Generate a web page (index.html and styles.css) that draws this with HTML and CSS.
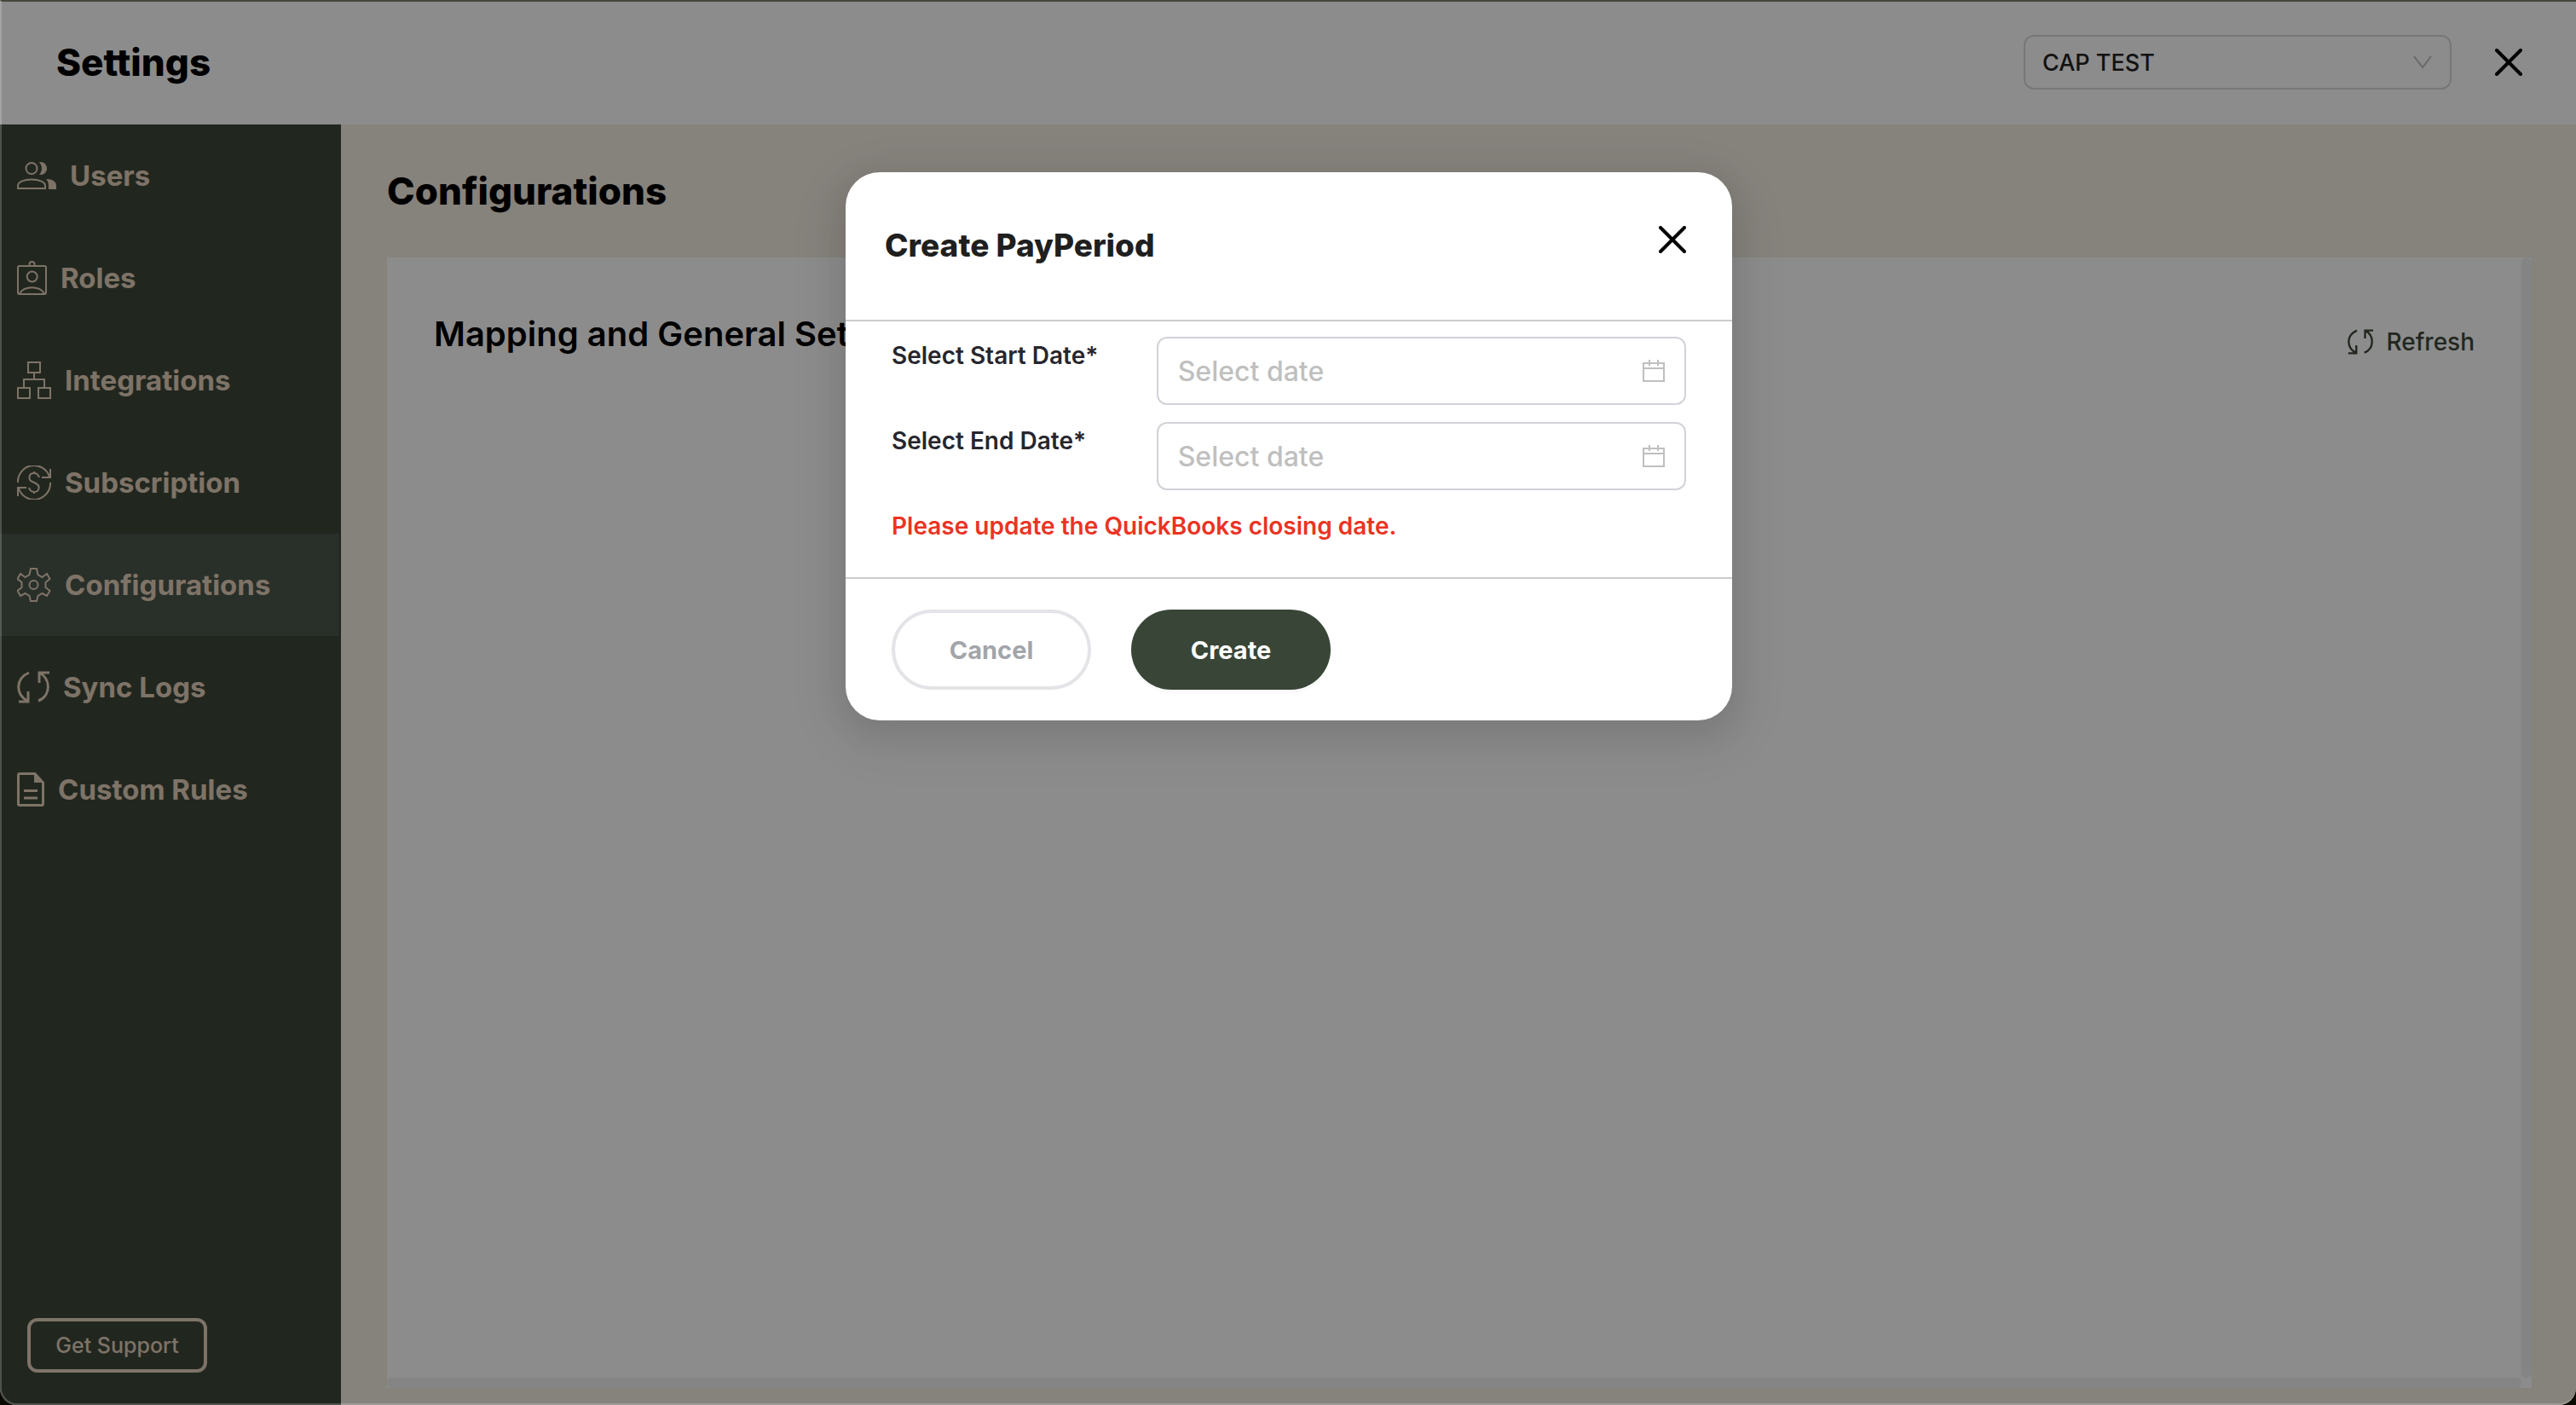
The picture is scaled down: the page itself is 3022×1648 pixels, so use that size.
FILE: index.html
```html
<!DOCTYPE html>
<html lang="en">
<head>
<title>Settings</title>
<meta charset="UTF-8">
<meta name="viewport" content="width=device-width, initial-scale=1.0">
<link rel="stylesheet" href="styles.css">
</head>
<body>
  <div class="app">
    <header class="topbar">
      <h1>Settings</h1>
      <div class="topbar-right">
        <div class="select-box">
          <select id="company" aria-label="Company">
            <option>CAP TEST</option>
          </select>
          <svg class="chevron" width="22" height="16" viewBox="0 0 22 16" fill="none" stroke="currentColor" stroke-width="2"><path d="M1 1l10 13L21 1"/></svg>
        </div>
        <button type="button" class="close-btn" aria-label="Close settings">
          <svg width="32" height="32" viewBox="0 0 32 32" fill="none" stroke="currentColor" stroke-width="4" stroke-linecap="round"><path d="M2 2l28 28M30 2L2 30"/></svg>
        </button>
      </div>
    </header>

    <div class="layout">
      <aside class="sidebar">
        <nav>
          <a href="#users">
            <svg width="46" height="32" viewBox="0 0 46 32" fill="none" stroke="currentColor" stroke-width="2"><circle cx="17" cy="7.5" r="6.5"/><path d="M1 31v-3c0-10 32-10 32 0v3z"/><path d="M26 0c12-1 12 16 0 15 4-5 4-10 0-15zM34 20c8 0 12 3 12 8v4h-9c0-6 0-9-3-12z" fill="currentColor" stroke="none"/></svg>
            <span>Users</span>
          </a>
          <a href="#roles">
            <svg width="35" height="40" viewBox="0 0 35 40" fill="none" stroke="currentColor" stroke-width="2"><rect x="1" y="6" width="33" height="33" rx="2"/><path d="M14.500 6V4a3 3 0 0 1 6 0v2"/><circle cx="17.700" cy="18.500" r="6"/><path d="M3 38c6-9 23-9 29 0"/></svg>
            <span>Roles</span>
          </a>
          <a href="#integrations">
            <svg width="40" height="44" viewBox="0 0 40 44" fill="none" stroke="currentColor" stroke-width="2"><rect x="13" y="1" width="14" height="12"/><rect x="1" y="31" width="14" height="12"/><rect x="25" y="31" width="14" height="12"/><path d="M20 13v8M8 31V21h24v10"/></svg>
            <span>Integrations</span>
          </a>
          <a href="#subscription">
            <svg width="40" height="40" viewBox="0 0 40 40" fill="none" stroke="currentColor" stroke-width="2"><path d="M1 20A19 19 0 0 1 38 13M39 4v10H29M39 20A19 19 0 0 1 2 27M1 36V26h10"/><path d="M26 14c-1-3-3-5-6-5-7 0-7 8-2 10l4 2c6 3 4 10-2 10-3 0-5-2-6-5M20 7v2M20 31v2"/></svg>
            <span>Subscription</span>
          </a>
          <a href="#configurations" class="active">
            <svg width="40" height="40" viewBox="0 0 40 40" fill="none" stroke="currentColor" stroke-width="2"><path d="M16 1h7l1.500 7 5 3 5.500-4 3.500 6-5 4v6l5 4-3.500 6-5.500-3-5 3-1.500 6h-7l-1.500-6-5-3-5.500 3-3.500-6 5-4v-6l-5-4 3.500-6 5.500 4 5-3z"/><circle cx="19.500" cy="20" r="5"/></svg>
            <span>Configurations</span>
          </a>
          <a href="#sync-logs">
            <svg width="38" height="38" viewBox="0 0 38 38" fill="none" stroke="currentColor" stroke-width="3"><path d="M14 2C-2 9-2 27 12 35M2 36h11V24M25 35c15-6 15-26 1-33M38 2H26v12"/></svg>
            <span>Sync Logs</span>
          </a>
          <a href="#custom-rules">
            <svg width="32" height="40" viewBox="0 0 32 40" fill="none" stroke="currentColor" stroke-width="3"><path d="M3 1.500h18L30.500 12v25q0 1.500-1.500 1.500H3q-1.500 0-1.500-1.500V3q0-1.500 1.500-1.500zM8 21.500h16M8 30h16"/><path d="M20 1v11h11z" fill="currentColor" stroke="none"/></svg>
            <span>Custom Rules</span>
          </a>
        </nav>
        <button type="button" class="support-btn">Get Support</button>
      </aside>

      <main class="content">
        <h2>Configurations</h2>
        <div class="panel">
          <div class="panel-head">
            <h3>Mapping and General Settings</h3>
            <button type="button" class="refresh-btn">
              <svg width="30" height="30" viewBox="0 0 38 38" fill="none" stroke="currentColor" stroke-width="3"><path d="M14 2C-2 9-2 27 12 35M1 36h12V24M25 35c15-6 15-26 1-33M38 2H26v12"/></svg>
              <span>Refresh</span>
            </button>
          </div>
          <div class="track"></div>
          <div class="track"></div>
        </div>
      </main>
    </div>

    <div class="mask">
      <form class="modal" role="dialog" aria-labelledby="modal-title">
        <div class="modal-header">
          <h2 id="modal-title">Create PayPeriod</h2>
          <button type="button" class="close-btn" aria-label="Close">
            <svg width="32" height="32" viewBox="0 0 32 32" fill="none" stroke="currentColor" stroke-width="4" stroke-linecap="round"><path d="M2 2l28 28M30 2L2 30"/></svg>
          </button>
        </div>
        <div class="modal-body">
          <div class="form-row">
            <label for="start_date">Select Start Date*</label>
            <div class="date-box">
              <input type="text" id="start_date" name="start_date" placeholder="Select date">
              <svg width="26" height="26" viewBox="0 0 26 26" fill="none" stroke="currentColor" stroke-width="2"><path d="M1 4h24v21H1zM1 10h24M8 0v7M18 0v7"/></svg>
            </div>
          </div>
          <div class="form-row">
            <label for="end_date">Select End Date*</label>
            <div class="date-box">
              <input type="text" id="end_date" name="end_date" placeholder="Select date">
              <svg width="26" height="26" viewBox="0 0 26 26" fill="none" stroke="currentColor" stroke-width="2"><path d="M1 4h24v21H1zM1 10h24M8 0v7M18 0v7"/></svg>
            </div>
          </div>
          <p class="error">Please update the QuickBooks closing date.</p>
        </div>
        <div class="modal-footer">
          <button type="button" class="btn cancel">Cancel</button>
          <button type="submit" class="btn create">Create</button>
        </div>
      </form>
    </div>
  </div>
</body>
</html>
```

FILE: styles.css
```css
* {
  box-sizing: border-box;
}

body {
  margin: 0;
  background-color: #0a0a02;
  font-family: Inter, sans-serif;
  color: #000;
}

h1, h2, h3, p {
  margin: 0;
}

button, input, select {
  font-family: inherit;
}

button {
  cursor: pointer;
}

svg {
  display: block;
  flex-shrink: 0;
}

.app {
  position: relative;
  min-height: 100vh;
  display: flex;
  flex-direction: column;
  background-color: #f4ede2;
  border-radius: 0 0 20px 20px;
  overflow: hidden;
}

/* window edge */
.app::after {
  content: "";
  position: absolute;
  inset: 0;
  border: 2px solid rgba(255, 255, 255, 0.2);
  border-top-color: #47463e;
  border-right: none;
  border-radius: 0 0 20px 20px;
  pointer-events: none;
}

.topbar {
  display: flex;
  justify-content: space-between;
  align-items: center;
  height: 146px;
  padding: 0 63px 0 66px;
  background-color: #fff;
}

.topbar h1,
.content h2 {
  font-size: 44px;
  line-height: 56px;
  font-weight: 800;
}

.topbar-right {
  display: flex;
  align-items: center;
  gap: 51px;
}

.select-box {
  position: relative;
  width: 502px;
}

.select-box select {
  appearance: none;
  display: block;
  width: 100%;
  height: 64px;
  padding: 0 20px;
  border: 2px solid #d9d9d9;
  border-radius: 12px;
  background-color: transparent;
  color: #222;
  font-size: 27px;
  font-weight: 500;
}

.chevron {
  position: absolute;
  right: 23px;
  top: 24px;
  color: #bfbfbf;
}

.close-btn {
  padding: 0;
  border: none;
  background: none;
  color: #000;
}

.layout {
  flex: 1;
  display: flex;
}

.sidebar {
  display: flex;
  flex-direction: column;
  justify-content: space-between;
  width: 400px;
  padding-bottom: 38px;
  background-color: #3c473a;
}

.sidebar a {
  display: flex;
  align-items: center;
  gap: 16px;
  height: 120px;
  padding-left: 20px;
  margin-right: 2px;
  color: #e6d1bc;
  font-size: 33px;
  font-weight: 700;
  text-decoration: none;
}

.sidebar a.active {
  background-color: #4b574b;
}

.support-btn {
  align-self: flex-start;
  width: 211px;
  height: 64px;
  margin-left: 32px;
  padding: 0;
  border: 4px solid #e6d1bc;
  border-radius: 12px;
  background: none;
  color: #e6d1bc;
  font-size: 25px;
  font-weight: 500;
}

.content {
  flex: 1;
  display: flex;
  flex-direction: column;
  gap: 50px;
  padding: 50px 52px 20px 54px;
}

.panel {
  flex: 1;
  display: grid;
  grid-template-columns: 1fr 12px;
  grid-template-rows: 1fr 12px;
  background-color: #fff;
}

.panel-head {
  display: flex;
  justify-content: space-between;
  align-items: flex-start;
  padding: 62px 55px 0;
}

.panel-head h3 {
  font-size: 40px;
  line-height: 56px;
  font-weight: 600;
}

.refresh-btn {
  display: flex;
  align-items: center;
  gap: 16px;
  height: 74px;
  padding: 0;
  border: none;
  background: none;
  color: #3c473a;
  font-size: 28px;
  font-weight: 500;
}

.track {
  border-radius: 6px;
  background-color: #f0f0f0;
}

/* dimmed layer with the dialog */
.mask {
  position: absolute;
  inset: 0;
  display: flex;
  justify-content: center;
  align-items: flex-start;
  padding: 202px 0 0 2px;
  background-color: rgba(0, 0, 0, 0.45);
}

.modal {
  width: 1040px;
  border-radius: 40px;
  background-color: #fff;
  box-shadow: 0 12px 32px 8px rgba(0, 0, 0, 0.08), 0 18px 64px 16px rgba(0, 0, 0, 0.05);
}

.modal-header {
  display: flex;
  justify-content: space-between;
  align-items: flex-start;
  height: 175px;
  padding: 63px 54px 0 46px;
  border-bottom: 2px solid #ccc;
}

.modal-header h2 {
  color: #1f1f1f;
  font-size: 37px;
  line-height: 46px;
  font-weight: 800;
}

.modal-body {
  padding: 8px 54px 38px;
}

.form-row {
  display: grid;
  grid-template-columns: 1fr 2fr;
  padding: 10px 0;
}

.form-row label,
.error {
  color: #27262e;
  font-size: 28px;
  line-height: 44px;
  font-weight: 600;
}

.date-box {
  display: flex;
  align-items: center;
  height: 80px;
  padding: 0 23px;
  border: 2px solid #d2d2d8;
  border-radius: 12px;
  color: #bfbfbf;
}

.date-box input {
  flex: 1;
  min-width: 0;
  padding: 0;
  border: none;
  outline: none;
  font-size: 32px;
  font-weight: 500;
}

.date-box input::placeholder {
  color: #bfbfbf;
}

.error {
  padding-top: 10px;
  color: #eb3323;
}

.modal-footer {
  display: flex;
  gap: 47px;
  padding: 36px 54px;
  border-top: 2px solid #ccc;
}

.btn {
  width: 234px;
  height: 94px;
  border-radius: 48px;
  font-size: 29px;
  font-weight: 700;
}

.cancel {
  border: 4px solid #e4e4e8;
  background-color: #fff;
  color: #a2a5aa;
}

.create {
  border: none;
  background-color: #384537;
  box-shadow: 0 4px 0 rgba(0, 0, 0, 0.02);
  color: #fff;
}

@media (max-width: 1100px) {
  .modal {
    width: 95%;
  }

  .select-box {
    width: 300px;
  }
}
```
